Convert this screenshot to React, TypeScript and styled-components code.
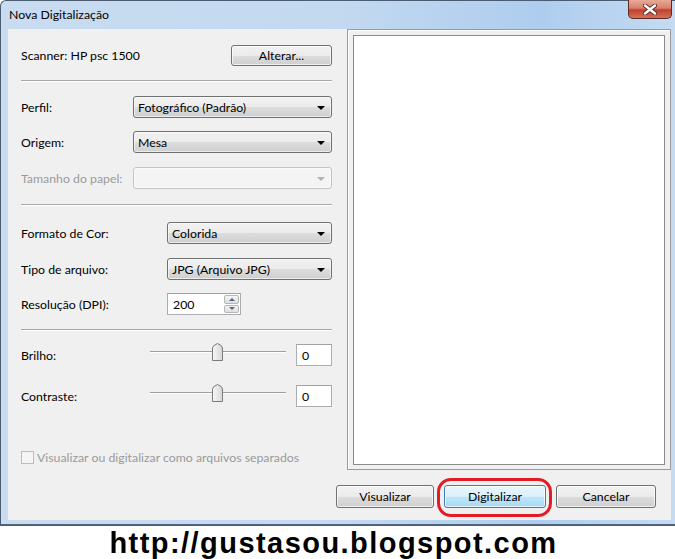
import styled, { createGlobalStyle } from 'styled-components';

const GlobalStyle = createGlobalStyle`
  html, body {
    margin: 0;
    padding: 0;
    background: #ffffff;
  }
  body {
    font-family: Lato, "Noto Sans", sans-serif;
    font-size: 12.3px;
    color: #000;
  }
`;

const Page = styled.div`
  width: 675px;
  height: 559px;
  overflow: hidden;
  background: #fff;
`;

const Window = styled.div`
  width: 675px;
  border: 1px solid #4a5d73;
  border-right: none;
  border-radius: 6px 0 0 0;
  box-sizing: border-box;
  background: linear-gradient(to right, #c9dcf0 0%, #c3d9f0 50%, #aecdee 80%, #c4dbf2 100%);
`;

const TitleBar = styled.div`
  height: 28px;
  display: flex;
  align-items: flex-start;
  justify-content: space-between;
  padding-left: 8px;
`;

const TitleText = styled.span`
  margin-top: 6px;
  font-size: 12.3px;
  color: #000;
`;

const CloseButton = styled.div`
  width: 44px;
  height: 19px;
  margin-top: -1px;
  margin-right: 3px;
  box-sizing: border-box;
  border: 1px solid #5d2a22;
  border-top: none;
  border-radius: 0 0 5px 5px;
  background: linear-gradient(to bottom, #e9a99a 0%, #d9806b 45%, #c0412b 55%, #d4705a 100%);
  display: flex;
  align-items: center;
  justify-content: center;
`;

const Frame = styled.div`
  padding: 0 4px 4px 7px;
  border-bottom: 1px solid #52677e;
`;

const Client = styled.div`
  height: 491px;
  background: #f0f0f0;
  display: grid;
  grid-template-columns: 339px 1fr;
  grid-template-rows: 441px 1fr;
`;

const LeftPanel = styled.div`
  padding: 15px 15px 0 13px;
  display: flex;
  flex-direction: column;
`;

const Row = styled.div<{ $mt: number }>`
  display: flex;
  align-items: center;
  margin-top: ${({ $mt }) => $mt}px;
  min-height: 22px;
`;

const Label = styled.span<{ $w?: number; $disabled?: boolean }>`
  width: ${({ $w }) => ($w ? `${$w}px` : 'auto')};
  flex-shrink: 0;
  color: ${({ $disabled }) => ($disabled ? '#9a9a9a' : '#000')};
  white-space: nowrap;
`;

const Separator = styled.div<{ $mt: number }>`
  margin-top: ${({ $mt }) => $mt}px;
  height: 1px;
  background: #a7a7a7;
  border-bottom: 1px solid #ffffff;
`;

const Button = styled.div<{ $w: number; $default?: boolean }>`
  width: ${({ $w }) => $w}px;
  height: 23px;
  box-sizing: border-box;
  border: 1px solid ${({ $default }) => ($default ? '#3c7fb1' : '#707070')};
  border-radius: 3px;
  background: ${({ $default }) =>
    $default
      ? 'linear-gradient(to bottom, #eaf6fd 0%, #d9f0fc 50%, #bee6fd 51%, #a7d9f5 100%)'
      : 'linear-gradient(to bottom, #f2f2f2 0%, #ebebeb 50%, #dddddd 51%, #cfcfcf 100%)'};
  box-shadow: inset 0 0 0 1px rgba(255, 255, 255, 0.7);
  display: flex;
  align-items: center;
  justify-content: center;
  color: #000;
  position: relative;
`;

const ChangeButton = styled(Button)`
  margin-left: auto;
  height: 21px;
`;

const Highlight = styled.span`
  position: absolute;
  left: -8px;
  right: -7px;
  top: -8px;
  bottom: -10px;
  border: 3px solid #e21b24;
  border-radius: 14px;
`;

const Select = styled.div<{ $w: number; $disabled?: boolean }>`
  width: ${({ $w }) => $w}px;
  height: 22px;
  box-sizing: border-box;
  border: 1px solid ${({ $disabled }) => ($disabled ? '#c3c3c3' : '#707070')};
  border-radius: 3px;
  background: ${({ $disabled }) =>
    $disabled
      ? '#f4f4f4'
      : 'linear-gradient(to bottom, #f2f2f2 0%, #ebebeb 50%, #dddddd 51%, #cfcfcf 100%)'};
  box-shadow: inset 0 0 0 1px rgba(255, 255, 255, 0.6);
  display: flex;
  align-items: center;
  justify-content: space-between;
  padding: 0 6px 0 4px;
  margin-left: auto;
`;

const Arrow = styled.span<{ $disabled?: boolean }>`
  width: 0;
  height: 0;
  border-left: 4px solid transparent;
  border-right: 4px solid transparent;
  border-top: 4px solid ${({ $disabled }) => ($disabled ? '#b0b0b0' : '#000')};
  margin-top: 1px;
`;

const TextBox = styled.div<{ $w: number }>`
  width: ${({ $w }) => $w}px;
  height: 22px;
  box-sizing: border-box;
  border: 1px solid #abadb3;
  border-top-color: #a0a2a8;
  background: #fff;
  display: flex;
  align-items: center;
  padding-left: 5px;
  position: relative;
`;

const SpinButtons = styled.div`
  position: absolute;
  right: 1px;
  top: 1px;
  bottom: 1px;
  width: 15px;
  display: flex;
  flex-direction: column;
  gap: 1px;
`;

const SpinButton = styled.div<{ $up?: boolean }>`
  flex: 1;
  box-sizing: border-box;
  border: 1px solid #b6b6b6;
  border-radius: 2px;
  background: linear-gradient(to bottom, #f5f5f5, #dedede);
  display: flex;
  align-items: center;
  justify-content: center;
  &::after {
    content: '';
    border-left: 3px solid transparent;
    border-right: 3px solid transparent;
    ${({ $up }) => ($up ? 'border-bottom: 3px solid #56678a;' : 'border-top: 3px solid #56678a;')}
  }
`;

const Slider = styled.div`
  width: 136px;
  height: 22px;
  margin-left: auto;
  margin-right: 10px;
  position: relative;
`;

const Track = styled.div`
  position: absolute;
  left: 0;
  right: 0;
  top: 7px;
  height: 1px;
  background: #9e9e9e;
  border-bottom: 1px solid #ffffff;
`;

const Thumb = styled.svg`
  position: absolute;
  left: 62px;
  top: -1px;
`;

const CheckRow = styled(Row)`
  min-height: 14px;
`;

const CheckBox = styled.span`
  width: 13px;
  height: 13px;
  box-sizing: border-box;
  border: 1px solid #bdbdbd;
  background: #f4f4f4;
  margin-right: 3px;
`;

const Preview = styled.div`
  border: 1px solid #9a9a9a;
  box-shadow: inset 1px 1px 0 #fff;
  padding: 5px 5px 4px 5px;
  display: flex;
`;

const PreviewArea = styled.div`
  flex: 1;
  background: #fff;
  border: 1px solid #8a8a8a;
`;

const ButtonBar = styled.div`
  grid-column: 1 / 3;
  display: flex;
  justify-content: flex-end;
  align-items: flex-start;
  gap: 10px;
  padding: 15px 15px 0 0;
`;

const Caption = styled.div`
  text-align: center;
  padding-right: 8px;
  margin-top: 1px;
  font-family: "Liberation Sans", Arial, sans-serif;
  font-weight: bold;
  font-size: 29px;
  letter-spacing: 1.45px;
  line-height: 32px;
  color: #000;
`;

const SliderThumb = () => (
  <Thumb width="11" height="18" viewBox="0 0 11 18">
    <defs>
      <linearGradient id="tg" x1="0" y1="0" x2="1" y2="0">
        <stop offset="0" stopColor="#f8f8f8" />
        <stop offset="1" stopColor="#d6d6d6" />
      </linearGradient>
    </defs>
    <path d="M0.5 17.5 V5 Q0.5 2.5 5.5 0.5 Q10.5 2.5 10.5 5 V17.5 Z" fill="url(#tg)" stroke="#7a7a7a" />
  </Thumb>
);

const App = () => {
  return (
    <Page>
      <GlobalStyle />
      <Window>
        <TitleBar>
          <TitleText>Nova Digitalização</TitleText>
          <CloseButton>
            <svg width="14" height="11" viewBox="0 0 14 11">
              <path d="M2 1.5 L12 9.5 M12 1.5 L2 9.5" stroke="#5a2a22" strokeWidth="4.2" strokeLinecap="round" />
              <path d="M2 1.5 L12 9.5 M12 1.5 L2 9.5" stroke="#ffffff" strokeWidth="2.4" strokeLinecap="round" />
            </svg>
          </CloseButton>
        </TitleBar>
        <Frame>
          <Client>
            <LeftPanel>
              <Row $mt={0}>
                <Label>Scanner: HP psc 1500</Label>
                <ChangeButton $w={101}>Alterar...</ChangeButton>
              </Row>
              <Separator $mt={14} />
              <Row $mt={14}>
                <Label $w={112}>Perfil:</Label>
                <Select $w={200}>
                  <span>Fotográfico (Padrão)</span>
                  <Arrow />
                </Select>
              </Row>
              <Row $mt={13}>
                <Label $w={112}>Origem:</Label>
                <Select $w={200}>
                  <span>Mesa</span>
                  <Arrow />
                </Select>
              </Row>
              <Row $mt={14}>
                <Label $w={112} $disabled>Tamanho do papel:</Label>
                <Select $w={200} $disabled>
                  <span />
                  <Arrow $disabled />
                </Select>
              </Row>
              <Separator $mt={15} />
              <Row $mt={16}>
                <Label $w={146}>Formato de Cor:</Label>
                <Select $w={166}>
                  <span>Colorida</span>
                  <Arrow />
                </Select>
              </Row>
              <Row $mt={14}>
                <Label $w={146}>Tipo de arquivo:</Label>
                <Select $w={166}>
                  <span>JPG (Arquivo JPG)</span>
                  <Arrow />
                </Select>
              </Row>
              <Row $mt={13}>
                <Label $w={146}>Resolução (DPI):</Label>
                <TextBox $w={74}>
                  200
                  <SpinButtons>
                    <SpinButton $up />
                    <SpinButton />
                  </SpinButtons>
                </TextBox>
              </Row>
              <Separator $mt={14} />
              <Row $mt={13}>
                <Label>Brilho:</Label>
                <Slider>
                  <Track />
                  <SliderThumb />
                </Slider>
                <TextBox $w={36}>0</TextBox>
              </Row>
              <Row $mt={19}>
                <Label>Contraste:</Label>
                <Slider>
                  <Track />
                  <SliderThumb />
                </Slider>
                <TextBox $w={36}>0</TextBox>
              </Row>
              <CheckRow $mt={43}>
                <CheckBox />
                <Label $disabled>Visualizar ou digitalizar como arquivos separados</Label>
              </CheckRow>
            </LeftPanel>
            <Preview>
              <PreviewArea />
            </Preview>
            <ButtonBar>
              <Button $w={98}>Visualizar</Button>
              <Button $w={102} $default>
                Digitalizar
                <Highlight />
              </Button>
              <Button $w={100}>Cancelar</Button>
            </ButtonBar>
          </Client>
        </Frame>
      </Window>
      <Caption>http://gustasou.blogspot.com</Caption>
    </Page>
  );
};

export default App;
